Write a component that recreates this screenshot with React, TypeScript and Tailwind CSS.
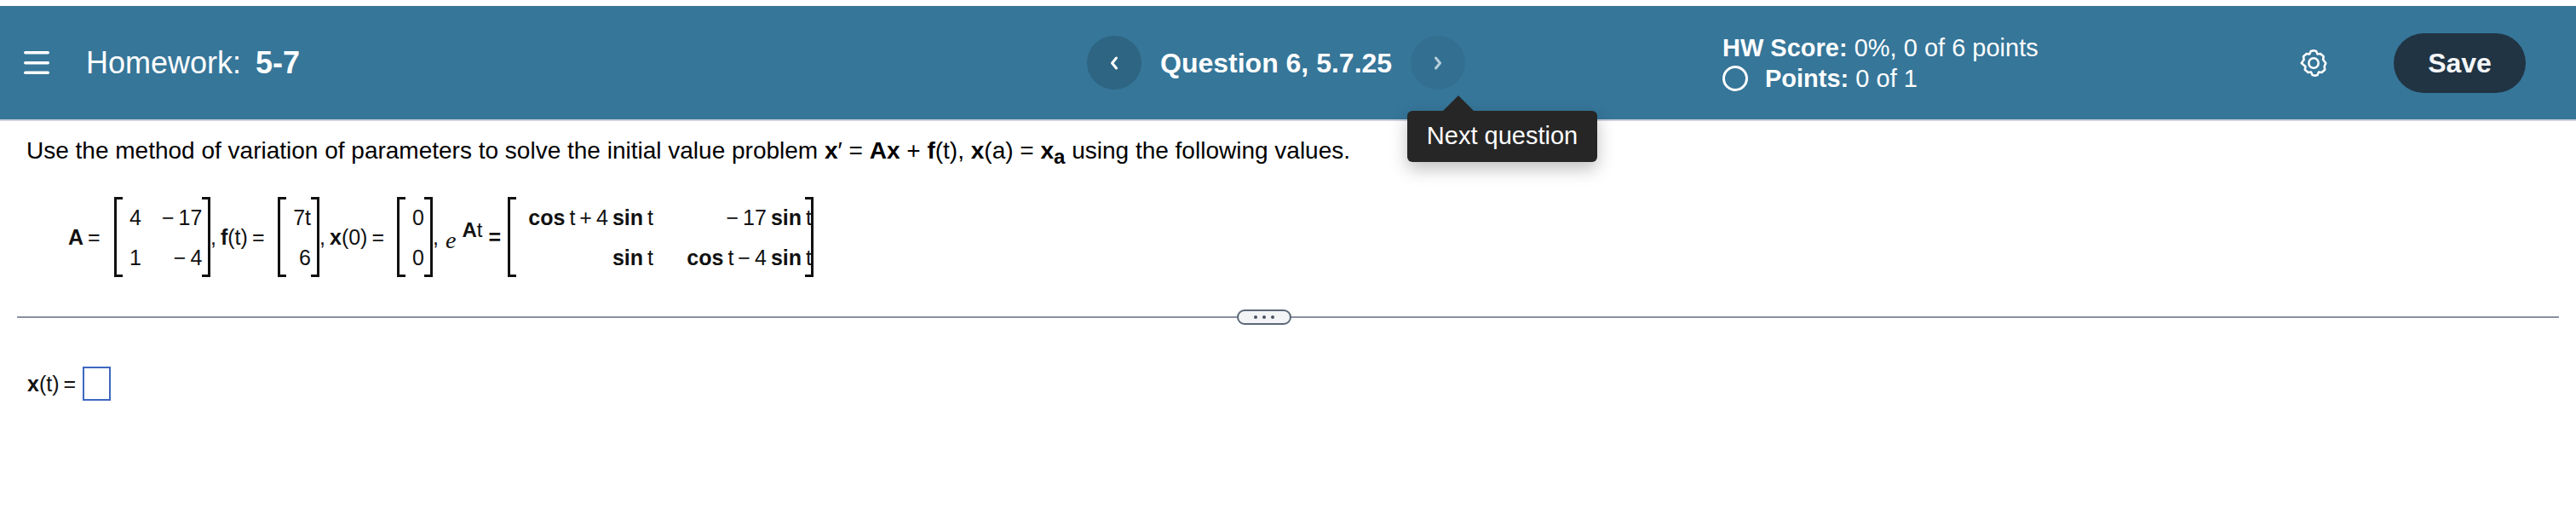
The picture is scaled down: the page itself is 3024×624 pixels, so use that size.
import React from "react";

const T = "\u2009";

function Bracket({ side }: { side: "l" | "r" }) {
  return (
    <div className={side === "l"
      ? "w-[10px] h-[94px] shrink-0 border-l-[3px] border-y-[3px] border-[#111]"
      : "w-[10px] h-[94px] shrink-0 border-r-[3px] border-y-[3px] border-[#111]"} />
  );
}

function Matrix({ cols, rows, pad, gap }: { cols: string; rows: React.ReactNode[][]; pad: string; gap?: string }) {
  return (
    <div className="flex items-center">
      <Bracket side="l" />
      <div className={`${pad} grid ${cols} ${gap ?? ""} gap-y-[21px] text-right leading-[26px]`}>
        {rows.flat().map((c, i) => (
          <div key={i} className="whitespace-pre">{c}</div>
        ))}
      </div>
      <Bracket side="r" />
    </div>
  );
}

export default function App() {
  return (
    <div className="w-[3024px] h-[624px] bg-white pt-[7px] overflow-hidden font-['Liberation_Sans',Arial,sans-serif] text-[#111]">
      <header className="relative h-[135px] bg-[#367699] border-b-2 border-[#cdd2da] flex items-center text-white">
        <div className="w-[1276px] flex items-center pl-[28px]">
          <svg width="30" height="27" viewBox="0 0 30 27" className="shrink-0">
            <rect x="0" y="0" width="30" height="3.5" rx="1.7" fill="#fff" />
            <rect x="0" y="12" width="30" height="3.5" rx="1.7" fill="#fff" />
            <rect x="0" y="23.5" width="30" height="3.5" rx="1.7" fill="#fff" />
          </svg>
          <div className="ml-[43px] text-[36px] whitespace-pre leading-none">
            Homework:<span className="font-bold ml-[17px]">5-7</span>
          </div>
        </div>
        <div className="w-[746px] flex items-center">
          <button className="w-[64px] h-[63px] rounded-full bg-[#2e6582] flex items-center justify-center">
            <svg width="12" height="20" viewBox="0 0 12 20" fill="none" stroke="#fff" strokeWidth="3" strokeLinecap="round" strokeLinejoin="round"><path d="M8.5 4 3.5 10l5 6" /></svg>
          </button>
          <div className="ml-[22px] w-[294px] font-bold text-[32px] leading-none whitespace-nowrap">Question 6, 5.7.25</div>
          <button className="w-[64px] h-[63px] rounded-full bg-[#336f90] flex items-center justify-center">
            <svg width="12" height="20" viewBox="0 0 12 20" fill="none" stroke="#b9cfdb" strokeWidth="3" strokeLinecap="round" strokeLinejoin="round"><path d="M3.5 4l5 6-5 6" /></svg>
          </button>
        </div>
        <div className="flex-1 flex items-center">
          <div className="w-[676px] text-[29px] leading-[36px]">
            <div className="whitespace-nowrap"><b>HW Score:</b> 0%, 0 of 6 points</div>
            <div className="flex items-center whitespace-nowrap">
              <span className="w-[30px] h-[30px] rounded-full border-[3.5px] border-white mr-[20px]" />
              <span><b>Points:</b> 0 of 1</span>
            </div>
          </div>
          <svg width="36" height="38" viewBox="0 0 24 24" fill="none" stroke="#fff" strokeWidth="1.7" strokeLinecap="round" strokeLinejoin="round" className="shrink-0">
            <path d="M12 2.2l2 .5 1 2.3 2.3-.3 2.5 2.1-.4 2.5L21.5 12l-1.100 2.700.400 2.500-2.500 2.100-2.300-.300-1 2.300-2 .500-2-.500-1-2.300-2.300.300-2.500-2.100.400-2.500L2.500 12l1.900-2.700-.400-2.500 2.500-2.100 2.300.300 1-2.300z" />
            <circle cx="12" cy="12" r="3.800" />
          </svg>
          <button className="ml-[76px] w-[155px] h-[70px] rounded-full bg-[#213444] text-[#f4f6f8] font-bold text-[32px] leading-none">Save</button>
        </div>
        <div className="absolute left-[1652px] top-[123px] w-[223px] h-[60px] rounded-[6px] bg-[#262626] text-white text-[29px] flex items-center justify-center shadow-[0_8px_20px_rgba(0,0,0,0.25)] z-10">
          Next question
          <span className="absolute left-[42px] top-[-18px] w-0 h-0 border-x-[18px] border-x-transparent border-b-[18px] border-b-[#262626]" />
        </div>
      </header>

      <main>
        <p className="pl-[31px] pt-[19px] text-[28px] leading-[32px] whitespace-nowrap text-black">
          Use the method of variation of parameters to solve the initial value problem <b>x</b>′ = <b>Ax</b> + <b>f</b>(t), <b>x</b>(a) = <b>x</b><sub className="font-bold text-[24px]">a</sub> using the following values.
        </p>

        <div className="pl-[80px] mt-[38px] flex items-center text-[25px] leading-none h-[94px] whitespace-pre">
          <span className="w-[54px]"><b>A</b>{T}=</span>
          <Matrix cols="grid-cols-[auto_auto]" gap="gap-x-[24px]" pad="pl-[8px] pr-[10px] w-[93px]" rows={[["4", `−${T}17`], ["1", `−${T}4`]]} />
          <span className="w-[79px]">,{T}<b>f</b>(t){T}=</span>
          <Matrix cols="grid-cols-[auto]" pad="pl-[8px] pr-[0px] w-[29px]" rows={[["7t"], ["6"]]} />
          <span className="w-[91px]">,{T}<b>x</b>(0){T}=</span>
          <Matrix cols="grid-cols-[auto]" pad="pl-[2px] pr-[0px] w-[22px]" rows={[["0"], ["0"]]} />
          <span className="w-[88px] flex items-center">
            ,<span className="ml-[8px] font-['Liberation_Serif',serif] italic text-[28px] mt-[8px]">e</span>
            <span className="ml-[7px] text-[24px] mb-[16px]"><b>A</b>t</span>
            <span className="ml-[7px] mt-[1px] font-bold">=</span>
          </span>
          <Matrix cols="grid-cols-[153px_169px]" gap="gap-x-[17px]" pad="pl-[8px] pr-[9px] w-[339px]" rows={[
            [<><b>cos</b>{T}t{T}+{T}4{T}<b>sin</b>{T}t</>, <>−{T}17{T}<b>sin</b>{T}t</>],
            [<><b>sin</b>{T}t</>, <><b>cos</b>{T}t{T}−{T}4{T}<b>sin</b>{T}t</>],
          ]} />
        </div>

        <div className="mx-[20px] mt-[46px] relative h-[2px] bg-[#8a90a0]">
          <div className="absolute left-[1432px] top-[-8px] w-[64px] h-[18px] rounded-full border-2 border-[#5b6878] bg-[#f3f4f6] flex items-center justify-center gap-[6px]">
            <span className="w-[4px] h-[4px] rounded-full bg-[#4a5462]" />
            <span className="w-[4px] h-[4px] rounded-full bg-[#4a5462]" />
            <span className="w-[4px] h-[4px] rounded-full bg-[#4a5462]" />
          </div>
        </div>

        <div className="pl-[32px] mt-[57px] flex items-center text-[25px] leading-none whitespace-pre">
          <span><b>x</b>(t){T}=</span>
          <span className="ml-[8px] w-[33px] h-[40px] border-[2.5px] border-[#3e67c0]" />
        </div>
      </main>
    </div>
  );
}
